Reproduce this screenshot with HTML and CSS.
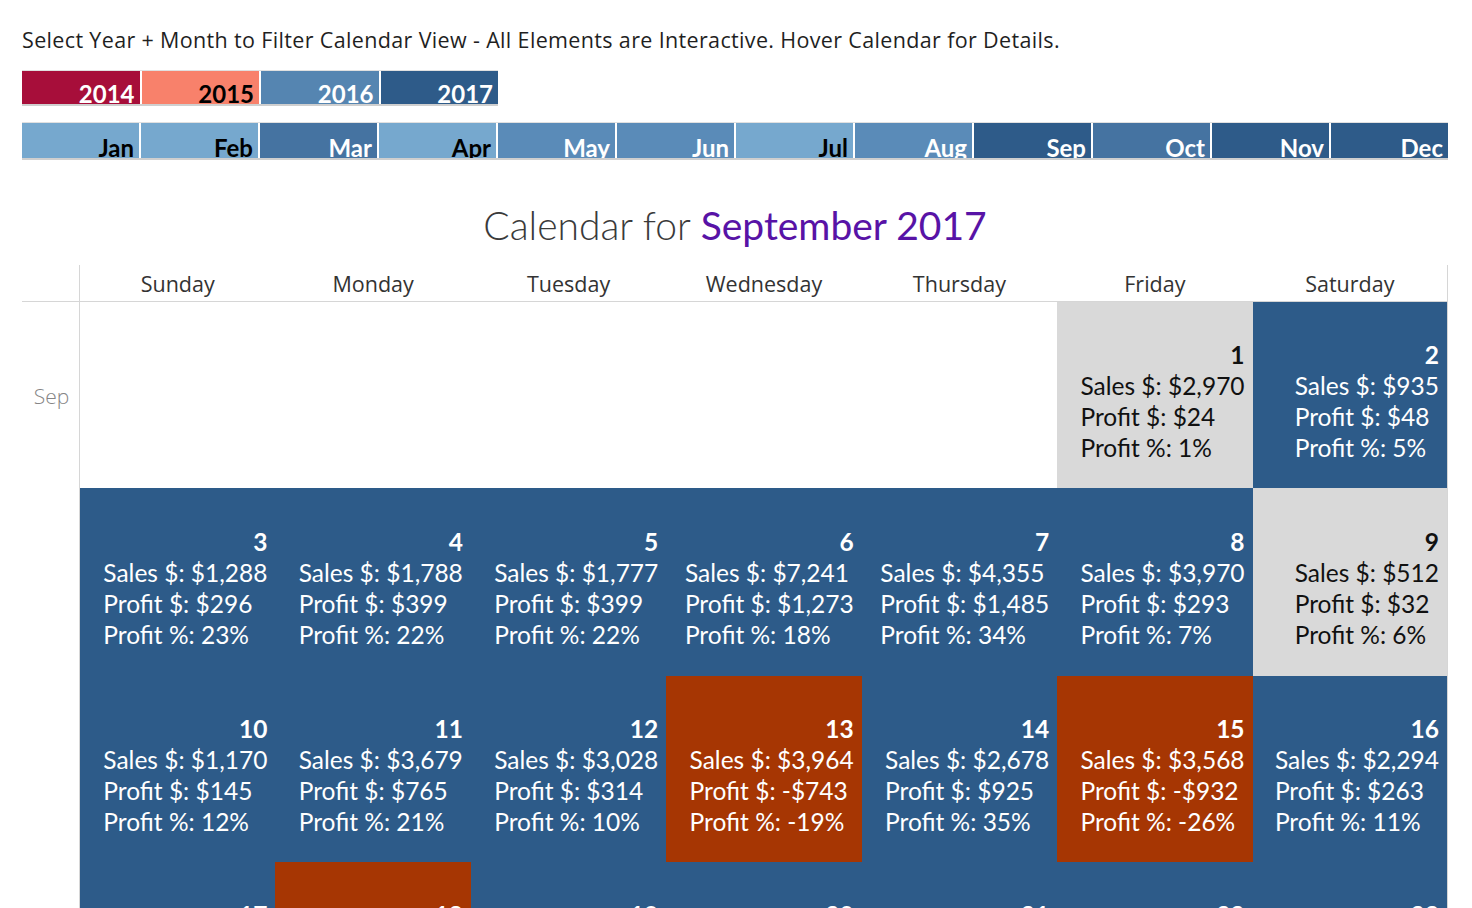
FILE: index.html
```html
<!DOCTYPE html>
<html>
<head>
<meta charset="utf-8">
<title>Calendar</title>
<link rel="stylesheet" href="styles.css">
</head>
<body>
<div class="page">
  <div class="intro">Select Year + Month to Filter Calendar View - All Elements are Interactive. Hover Calendar for Details.</div>

  <div class="years">
    <div class="btn y14"><span>2014</span></div>
    <div class="btn y15"><span>2015</span></div>
    <div class="btn y16"><span>2016</span></div>
    <div class="btn y17"><span>2017</span></div>
  </div>

  <div class="months">
    <div class="btn m-light"><span>Jan</span></div>
    <div class="btn m-light"><span>Feb</span></div>
    <div class="btn m-mid2"><span>Mar</span></div>
    <div class="btn m-light"><span>Apr</span></div>
    <div class="btn m-mid"><span>May</span></div>
    <div class="btn m-mid"><span>Jun</span></div>
    <div class="btn m-light"><span>Jul</span></div>
    <div class="btn m-mid"><span>Aug</span></div>
    <div class="btn m-dark"><span>Sep</span></div>
    <div class="btn m-mid2"><span>Oct</span></div>
    <div class="btn m-dark"><span>Nov</span></div>
    <div class="btn m-dark"><span>Dec</span></div>
  </div>

  <div class="title"><span class="t-lead">Calendar for </span><span class="t-month">September 2017</span></div>

  <div class="cal">
    <div class="corner"></div>
    <div class="dayname">Sunday</div>
    <div class="dayname">Monday</div>
    <div class="dayname">Tuesday</div>
    <div class="dayname">Wednesday</div>
    <div class="dayname">Thursday</div>
    <div class="dayname">Friday</div>
    <div class="dayname last">Saturday</div>

    <!-- week 1 -->
    <div class="rowlabel"><span>Sep</span></div>
    <div class="cell empty"></div>
    <div class="cell empty"></div>
    <div class="cell empty"></div>
    <div class="cell empty"></div>
    <div class="cell empty"></div>
    <div class="cell gray"><div class="info"><div class="num">1</div><div>Sales $: $2,970</div><div>Profit $: $24</div><div>Profit %: 1%</div></div></div>
    <div class="cell blue last"><div class="info"><div class="num">2</div><div>Sales $: $935</div><div>Profit $: $48</div><div>Profit %: 5%</div></div></div>

    <!-- week 2 -->
    <div class="rowlabel"></div>
    <div class="cell blue"><div class="info"><div class="num">3</div><div>Sales $: $1,288</div><div>Profit $: $296</div><div>Profit %: 23%</div></div></div>
    <div class="cell blue"><div class="info"><div class="num">4</div><div>Sales $: $1,788</div><div>Profit $: $399</div><div>Profit %: 22%</div></div></div>
    <div class="cell blue"><div class="info"><div class="num">5</div><div>Sales $: $1,777</div><div>Profit $: $399</div><div>Profit %: 22%</div></div></div>
    <div class="cell blue"><div class="info"><div class="num">6</div><div>Sales $: $7,241</div><div>Profit $: $1,273</div><div>Profit %: 18%</div></div></div>
    <div class="cell blue"><div class="info"><div class="num">7</div><div>Sales $: $4,355</div><div>Profit $: $1,485</div><div>Profit %: 34%</div></div></div>
    <div class="cell blue"><div class="info"><div class="num">8</div><div>Sales $: $3,970</div><div>Profit $: $293</div><div>Profit %: 7%</div></div></div>
    <div class="cell gray last"><div class="info"><div class="num">9</div><div>Sales $: $512</div><div>Profit $: $32</div><div>Profit %: 6%</div></div></div>

    <!-- week 3 -->
    <div class="rowlabel"></div>
    <div class="cell blue"><div class="info"><div class="num">10</div><div>Sales $: $1,170</div><div>Profit $: $145</div><div>Profit %: 12%</div></div></div>
    <div class="cell blue"><div class="info"><div class="num">11</div><div>Sales $: $3,679</div><div>Profit $: $765</div><div>Profit %: 21%</div></div></div>
    <div class="cell blue"><div class="info"><div class="num">12</div><div>Sales $: $3,028</div><div>Profit $: $314</div><div>Profit %: 10%</div></div></div>
    <div class="cell orange"><div class="info"><div class="num">13</div><div>Sales $: $3,964</div><div>Profit $: -$743</div><div>Profit %: -19%</div></div></div>
    <div class="cell blue"><div class="info"><div class="num">14</div><div>Sales $: $2,678</div><div>Profit $: $925</div><div>Profit %: 35%</div></div></div>
    <div class="cell orange"><div class="info"><div class="num">15</div><div>Sales $: $3,568</div><div>Profit $: -$932</div><div>Profit %: -26%</div></div></div>
    <div class="cell blue last"><div class="info"><div class="num">16</div><div>Sales $: $2,294</div><div>Profit $: $263</div><div>Profit %: 11%</div></div></div>

    <!-- week 4 -->
    <div class="rowlabel"></div>
    <div class="cell blue"><div class="info"><div class="num">17</div><div>Sales $: $1,046</div><div>Profit $: $188</div><div>Profit %: 18%</div></div></div>
    <div class="cell orange"><div class="info"><div class="num">18</div><div>Sales $: $2,412</div><div>Profit $: -$311</div><div>Profit %: -13%</div></div></div>
    <div class="cell blue"><div class="info"><div class="num">19</div><div>Sales $: $3,104</div><div>Profit $: $402</div><div>Profit %: 13%</div></div></div>
    <div class="cell blue"><div class="info"><div class="num">20</div><div>Sales $: $1,879</div><div>Profit $: $251</div><div>Profit %: 13%</div></div></div>
    <div class="cell blue"><div class="info"><div class="num">21</div><div>Sales $: $2,233</div><div>Profit $: $467</div><div>Profit %: 21%</div></div></div>
    <div class="cell blue"><div class="info"><div class="num">22</div><div>Sales $: $1,560</div><div>Profit $: $174</div><div>Profit %: 11%</div></div></div>
    <div class="cell blue last"><div class="info"><div class="num">23</div><div>Sales $: $2,871</div><div>Profit $: $390</div><div>Profit %: 14%</div></div></div>
  </div>
</div>
</body>
</html>
```

FILE: styles.css
```css
html, body {
  margin: 0;
  padding: 0;
  background: #ffffff;
}

body {
  font-family: Lato, "Open Sans", "Liberation Sans", sans-serif;
  color: #1a1a1a;
}

.page {
  width: 1426px;
  padding: 28px 0 0 22px;
}

.intro {
  font-family: "Open Sans", "Noto Sans", sans-serif;
  font-size: 21.5px;
  letter-spacing: 0.35px;
  line-height: 24px;
  height: 24px;
  color: #1f1f1f;
  white-space: nowrap;
}

.years {
  margin-top: 18px;
  width: 476px;
  display: grid;
  grid-template-columns: repeat(4, 1fr);
  column-gap: 2px;
  border-top: 1px solid #e0e0e0;
  border-bottom: 2px solid #cfcfcf;
  height: 36px;
  box-sizing: border-box;
}

.months {
  margin-top: 16px;
  display: grid;
  grid-template-columns: repeat(12, 1fr);
  column-gap: 2px;
  border-top: 1px solid #e0e0e0;
  border-bottom: 2px solid #cfcfcf;
  height: 38px;
  box-sizing: border-box;
}

.btn {
  display: flex;
  justify-content: flex-end;
  align-items: flex-end;
  overflow: hidden;
  padding-right: 5px;
  font-weight: 700;
  font-size: 24px;
  color: #ffffff;
}

.btn span {
  line-height: 20px;
}

.months .btn span {
  line-height: 21px;
}

.y14 { background: #a70e3a; }
.y15 { background: #f8816b; color: #000; }
.y16 { background: #5585b1; }
.y17 { background: #2e5b89; }

.m-light { background: #76a8ce; color: #000; }
.m-mid { background: #5a8bb8; }
.m-mid2 { background: #4573a1; }
.m-dark { background: #2e5b89; }

.title {
  margin-top: 35px;
  height: 60px;
  line-height: 60px;
  text-align: center;
  font-size: 39px;
  white-space: nowrap;
}

.t-lead {
  color: #3a3a3a;
  font-weight: 300;
}

.t-month {
  color: #5813a6;
  font-weight: 400;
}

.cal {
  margin-top: 10px;
  display: grid;
  grid-template-columns: 58px repeat(7, 1fr);
  grid-template-rows: 37px 186px 188px 186px 186px;
}

.corner {
  border-right: 1px solid #d6d6d6;
  border-bottom: 1px solid #d6d6d6;
}

.dayname {
  font-family: "Open Sans", "Noto Sans", sans-serif;
  border-bottom: 1px solid #d6d6d6;
  text-align: center;
  font-size: 21.5px;
  line-height: 38px;
  color: #333333;
}

.dayname.last {
  border-right: 1px solid #d6d6d6;
}

.rowlabel {
  font-family: "Open Sans", "Noto Sans", sans-serif;
  border-right: 1px solid #d6d6d6;
  display: flex;
  align-items: center;
  justify-content: center;
  font-size: 21px;
  color: #858585;
  font-weight: 300;
  padding-top: 2px;
  padding-left: 2px;
}

.cell {
  display: flex;
  justify-content: flex-end;
  align-items: center;
  padding: 11px 8px 0 0;
  font-size: 24.5px;
  line-height: 31px;
  white-space: nowrap;
}

.cell.last {
  border-right: 1px solid #d6d6d6;
}

.info {
  display: inline-block;
  text-align: left;
}

.num {
  text-align: right;
  font-weight: 700;
}

.empty { background: #ffffff; }
.gray { background: #d9d9d9; color: #111; }
.blue { background: #2d5b89; color: #ffffff; }
.orange { background: #a63603; color: #ffffff; }
```
